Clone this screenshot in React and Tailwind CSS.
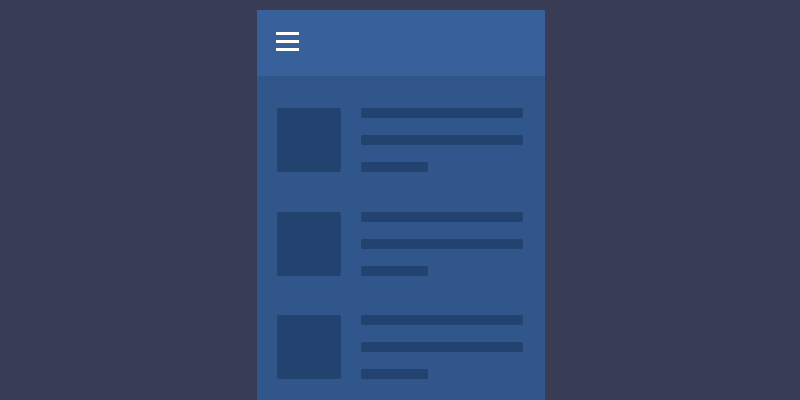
import React from "react";

const rows = [0, 1, 2];

function SkeletonRow() {
  return (
    <div className="flex gap-5">
      <div className="w-16 h-16 rounded-[2px] bg-[#22426f] shrink-0" />
      <div className="flex flex-col gap-[17px] w-[162px]">
        <div className="h-[10px] rounded-[2px] bg-[#22426f]" />
        <div className="h-[10px] rounded-[2px] bg-[#22426f]" />
        <div className="h-[10px] w-[67px] rounded-[2px] bg-[#22426f]" />
      </div>
    </div>
  );
}

export default function App() {
  return (
    <div className="w-[800px] h-[400px] bg-[#393c55] overflow-hidden flex justify-center pl-[2px]">
      <div className="mt-[10px] w-[288px] h-[390px] bg-[#30568b] flex flex-col">
        <div className="h-[66px] bg-[#38609a] flex items-start pt-[22px] px-[19px] shrink-0">
          <div className="flex flex-col gap-[5.5px]">
            <div className="h-[2.5px] w-[23px] bg-white" />
            <div className="h-[2.5px] w-[23px] bg-white" />
            <div className="h-[2.5px] w-[23px] bg-white" />
          </div>
        </div>
        <div className="flex flex-col gap-[39.5px] pt-8 pl-5">
          {rows.map((r) => (
            <SkeletonRow key={r} />
          ))}
        </div>
      </div>
    </div>
  );
}
